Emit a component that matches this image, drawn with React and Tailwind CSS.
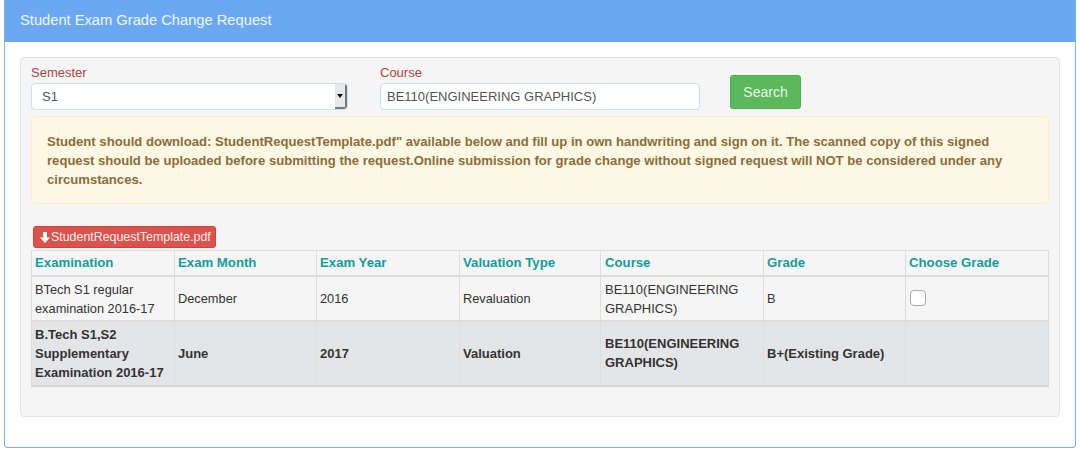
import React from 'react';

const rows = [
  { exam: 'BTech S1 regular examination 2016-17', month: 'December', year: '2016', type: 'Revaluation', course: 'BE110(ENGINEERING GRAPHICS)', grade: 'B', choose: true },
  { exam: 'B.Tech S1,S2 Supplementary Examination 2016-17', month: 'June', year: '2017', type: 'Valuation', course: 'BE110(ENGINEERING GRAPHICS)', grade: 'B+(Existing Grade)', existing: true },
];

const heads = [
  ['Examination', 'w-[143px] pl-[3px]'],
  ['Exam Month', 'w-[142px] pl-[3px]'],
  ['Exam Year', 'w-[143px] pl-[3px]'],
  ['Valuation Type', 'w-[141px] pl-[3px]'],
  ['Course', 'w-[163px] pl-[4px]'],
  ['Grade', 'w-[142px] pl-[3px]'],
  ['Choose Grade', 'w-[143px] pl-[3px]'],
];

function App() {
  const base = (existing) =>
    `border border-[#ddd] border-b-2 pr-[3px] leading-[19px] ${existing ? 'border-b-[#d5d6d8]' : ''}`;
  const cell = (existing) => `${base(existing)} pl-[3px] ${existing ? 'text-[13px]' : 'text-[12.8px]'}`;
  // the two-line cells sit a pixel lower in the plain row
  const tall = (existing) => (existing ? '' : 'pt-[2px]');

  return (
    <div className="h-[450px] w-[1080px] overflow-hidden bg-white pl-1 pr-1 font-['Liberation_Sans',sans-serif] text-[13px] text-[#333]">
      <div className="flex h-[448px] flex-col rounded-b border border-t-0 border-[#7fb2d6]">
        <div className="h-[42px] shrink-0 bg-[#6ca8f2] pl-[15px] pt-[11px] text-[14.7px] leading-[18px] text-[#eef5fd]">
          Student Exam Grade Change Request
        </div>
        <div className="px-[15px] pt-[15px]">
          <div className="h-[360px] rounded border border-[#e3e3e3] bg-[#f5f5f5] px-[10px] pt-[6px]">
            <div className="flex h-[52px]">
              <div className="w-[317px]">
                <div className="text-[13px] leading-[17px] text-[#a94442]">Semester</div>
                <div className="mt-[2px] flex h-[27px] overflow-hidden rounded-[4px] border border-[#d3e0ec] bg-white">
                  <div className="flex-1 pl-[10px] leading-[26px] text-[#555]">S1</div>
                  <div className="flex w-[12px] items-center justify-center rounded-br-[3px] border-r-2 border-b-2 border-[#777] bg-[#e8e8e8]">
                    <svg width="6" height="4" viewBox="0 0 6 4"><path d="M0 0h6L3 4z" fill="#111" /></svg>
                  </div>
                </div>
              </div>
              <div className="ml-[32px] w-[320px]">
                <div className="text-[13px] leading-[17px] text-[#a94442]">Course</div>
                <div className="mt-[2px] h-[27px] rounded-[4px] border border-[#d3e0ec] bg-white pl-[6px] leading-[26px] text-[#555]">
                  BE110(ENGINEERING GRAPHICS)
                </div>
              </div>
              <button className="ml-[30px] mt-[11px] h-[34px] w-[71px] rounded-[3px] border border-[#4cae4c] bg-[#5cb85c] text-[14px] text-[#e9f6e9]">
                Search
              </button>
            </div>
            <div className="h-[88px] rounded border border-[#faebcc] bg-[#fcf8e3] pl-[15px] pr-[30px] pt-[16px] text-[13.1px] font-bold leading-[18.8px] text-[#8a6d3b]">
              Student should download: StudentRequestTemplate.pdf" available below and fill up in own handwriting and sign on it. The scanned copy of this signed request should be uploaded before submitting the request.Online submission for grade change without signed request will NOT be considered under any circumstances.
            </div>
            <div className="mt-[22px] flex h-[24px] pl-[2px]">
              <div className="flex h-[22px] w-[183px] items-center rounded-[3px] border border-[#d43f3a] bg-[#d9534f] pl-[5px] text-[12.4px] text-[#fbeaea]">
                <svg width="12" height="13" viewBox="0 0 12 13" className="shrink-0"><path d="M4.200 1h3.600v5.500H11L6 12 1 6.500h3.200z" fill="#fff" /></svg>
                StudentRequestTemplate.pdf
              </div>
            </div>
            <table className="w-[1017px] table-fixed border-collapse">
              <thead>
                <tr className="h-[25px]">
                  {heads.map(([label, width]) => (
                    <th key={label} className={`${width} border border-b-2 border-[#ddd] text-left align-middle text-[13.2px] font-bold leading-[18px] text-[#169c9c]`}>
                      {label}
                    </th>
                  ))}
                </tr>
              </thead>
              <tbody>
                {rows.map((row) => (
                  <tr key={row.exam} className={row.existing ? 'h-[65px] bg-[#e4e5e7] font-bold' : 'h-[45px]'}>
                    <td className={`${cell(row.existing)} ${tall(row.existing)}`}>{row.exam}</td>
                    <td className={cell(row.existing)}>{row.month}</td>
                    <td className={cell(row.existing)}>{row.year}</td>
                    <td className={cell(row.existing)}>{row.type}</td>
                    <td className={`${base(row.existing)} pl-[4px] text-[13px] ${tall(row.existing)}`}>{row.course}</td>
                    <td className={cell(row.existing)}>{row.grade}</td>
                    <td className={cell(row.existing)}>
                      {row.choose && <div className="ml-[1px] h-[16px] w-[16px] rounded-[4px] border border-[#aaa] bg-white" />}
                    </td>
                  </tr>
                ))}
              </tbody>
            </table>
          </div>
        </div>
      </div>
    </div>
  );
}

export default App;
